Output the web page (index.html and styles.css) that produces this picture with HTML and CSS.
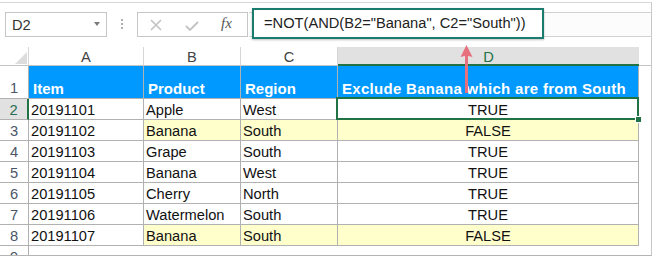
FILE: index.html
```html
<!DOCTYPE html>
<html>
<head>
<meta charset="utf-8">
<link rel="stylesheet" href="styles.css">
</head>
<body>
<div class="window">
  <div class="toolbar">
    <div class="namebox"><span class="nb-text">D2</span><span class="caret"></span></div>
    <div class="grip"><i></i><i></i><i></i></div>
    <div class="fbtns">
      <svg class="ico-x" viewBox="0 0 12 12"><path d="M1 1 L11 11 M11 1 L1 11" stroke="#c2c2c2" stroke-width="1.6" fill="none"/></svg>
      <svg class="ico-check" viewBox="0 0 14 10"><path d="M1 5 L5 9 L13 1" stroke="#c2c2c2" stroke-width="1.8" fill="none"/></svg>
      <span class="fx">fx</span>
    </div>
    <div class="fbar">
      <div class="fhl">=NOT(AND(B2="Banana", C2="South"))</div>
    </div>
  </div>
  <div class="sheet">
    <div class="corner"><span class="tri"></span></div>
    <div class="ch">A</div><div class="ch">B</div><div class="ch">C</div><div class="ch ch-sel">D</div><div class="ex ex-h"></div>

    <div class="rh rh-tall">1</div>
    <div class="c b">Item</div><div class="c b">Product</div><div class="c b">Region</div><div class="c b wide">Exclude Banana which are from South</div><div class="ex"></div>

    <div class="rh rh-sel">2</div>
    <div class="c">20191101</div><div class="c">Apple</div><div class="c">West</div><div class="c ctr sel">TRUE<span class="handle"></span></div><div class="ex"></div>

    <div class="rh">3</div>
    <div class="c">20191102</div><div class="c y">Banana</div><div class="c y">South</div><div class="c ctr y">FALSE</div><div class="ex"></div>

    <div class="rh">4</div>
    <div class="c">20191103</div><div class="c">Grape</div><div class="c">South</div><div class="c ctr">TRUE</div><div class="ex"></div>

    <div class="rh">5</div>
    <div class="c">20191104</div><div class="c">Banana</div><div class="c">West</div><div class="c ctr">TRUE</div><div class="ex"></div>

    <div class="rh">6</div>
    <div class="c">20191105</div><div class="c">Cherry</div><div class="c">North</div><div class="c ctr">TRUE</div><div class="ex"></div>

    <div class="rh">7</div>
    <div class="c">20191106</div><div class="c">Watermelon</div><div class="c">South</div><div class="c ctr">TRUE</div><div class="ex"></div>

    <div class="rh">8</div>
    <div class="c">20191107</div><div class="c y">Banana</div><div class="c y">South</div><div class="c ctr y">FALSE</div><div class="ex"></div>

    <div class="rh">9</div>
    <div class="e"></div><div class="e"></div><div class="e"></div><div class="e"></div><div class="ex"></div>
  </div>
  <svg class="arrow" viewBox="0 0 18 56" width="18" height="56">
    <polygon points="2.5,14 8.5,2 14.5,14 8.5,12.5" fill="#e7707f"/>
    <rect x="7" y="12" width="3" height="38" fill="#e7707f"/>
  </svg>
</div>
</body>
</html>
```
FILE: styles.css
```css
* { box-sizing: border-box; }
html, body { margin: 0; padding: 0; background: #ffffff; }
body { font-family: "Liberation Sans", Arial, sans-serif; color: #111; }

.window {
  position: relative;
  margin-top: 2px;
  width: 652px;
  height: 254px;
  border-top: 1px solid #d6d6d6;
  border-right: 1px solid #c8c8c8;
  border-bottom: 1px solid #b4b4b4;
  overflow: hidden;
  background: #fff;
}

.toolbar {
  height: 44px;
  display: flex;
  align-items: flex-start;
  padding-top: 9px;
}

.namebox {
  margin-left: 5px;
  width: 102px;
  height: 25px;
  border: 1px solid #c6c6c6;
  display: flex;
  align-items: center;
  justify-content: space-between;
  padding: 0 6px 0 6px;
}
.nb-text { font-size: 14.67px; color: #333; }
.caret {
  width: 0; height: 0;
  border-left: 3.5px solid transparent;
  border-right: 3.5px solid transparent;
  border-top: 4px solid #7a7a7a;
  margin-top: -1px;
}

.grip {
  width: 30px;
  height: 25px;
  display: flex;
  flex-direction: column;
  align-items: center;
  padding-top: 7px;
  gap: 2px;
}
.grip i { display: block; width: 2px; height: 2px; background: #b0b0b0; }

.fbtns {
  width: 111px;
  height: 25px;
  border: 1px solid #c6c6c6;
  display: flex;
  align-items: center;
  padding-left: 12px;
}
.ico-x { width: 12px; height: 12px; margin-right: 23px; }
.ico-check { width: 14px; height: 10px; margin-right: 22px; margin-top: 3px; }
.fx {
  font-family: "Liberation Serif", "Times New Roman", serif;
  font-style: italic;
  font-size: 15px;
  color: #555;
  margin-top: -2px;
}

.fbar {
  position: relative;
  flex: 1;
  margin-left: 1px;
  height: 25px;
  border-top: 1px solid #d2d2d2;
  border-bottom: 1px solid #d2d2d2;
  background: #fcfcfc;
}
.fhl {
  position: absolute;
  left: 3px;
  top: -5px;
  width: 292px;
  height: 31px;
  border: 2px solid #1b7b6f;
  background: #fff;
  padding-left: 10px;
  font-size: 14.67px;
  line-height: 27px;
  color: #222;
  white-space: nowrap;
  box-shadow: 0 1px 2px rgba(0,0,0,0.25);
}

.sheet {
  display: grid;
  grid-template-columns: 29px 115px 97px 97px 301px 12px;
  grid-template-rows: 19px 33px repeat(8, 21px);
  font-size: 14.67px;
}

.corner {
  position: relative;
  border-right: 1px solid #d5d5d5;
  border-bottom: 1px solid #c4c4c4;
}
.tri {
  position: absolute;
  right: 1px;
  bottom: 1px;
  width: 0; height: 0;
  border-left: 12px solid transparent;
  border-bottom: 12px solid #dcdcdc;
}

.ch {
  border-right: 1px solid #d5d5d5;
  border-bottom: 1px solid #c4c4c4;
  text-align: center;
  line-height: 18px;
  padding-top: 1px;
  color: #444;
}
.ch-sel {
  background: #e1e1e1;
  color: #217346;
  border-bottom: 2px solid #217346;
  border-right: none;
}
.ex-h { border-bottom: 1px solid #c4c4c4; }

.rh {
  border-right: 1px solid #b1b1b1;
  border-bottom: 1px solid #b1b1b1;
  color: #4a5568;
  display: flex;
  align-items: flex-end;
  justify-content: center;
  line-height: 17px;
}
.rh-tall { padding-bottom: 1px; }
.rh-sel {
  background: #e1e1e1;
  border-right: 2px solid #217346;
  color: #2a6b55;
}

.c {
  position: relative;
  border-right: 1px solid #b1b1b1;
  border-bottom: 1px solid #b1b1b1;
  display: flex;
  align-items: flex-end;
  padding-left: 2px;
  line-height: 17px;
  white-space: nowrap;
  color: #111;
}
.ctr { justify-content: center; padding-left: 0; }
.b {
  background: #0099ff;
  color: #fff;
  font-weight: bold;
  font-size: 15px;
  padding-left: 4px;
  padding-bottom: 1px;
}
.wide { letter-spacing: 0.3px; }
.y { background: #ffffcc; }

.sel::after {
  content: "";
  position: absolute;
  left: -2px;
  top: -2px;
  right: -1px;
  bottom: -1px;
  border: 2px solid #217346;
}
.handle {
  position: absolute;
  right: -3px;
  bottom: -3px;
  width: 5px;
  height: 5px;
  background: #217346;
  z-index: 2;
  outline: 1px solid #fff;
}

.e { }
.ex { }

.arrow {
  position: absolute;
  left: 458px;
  top: 40px;
}
```
